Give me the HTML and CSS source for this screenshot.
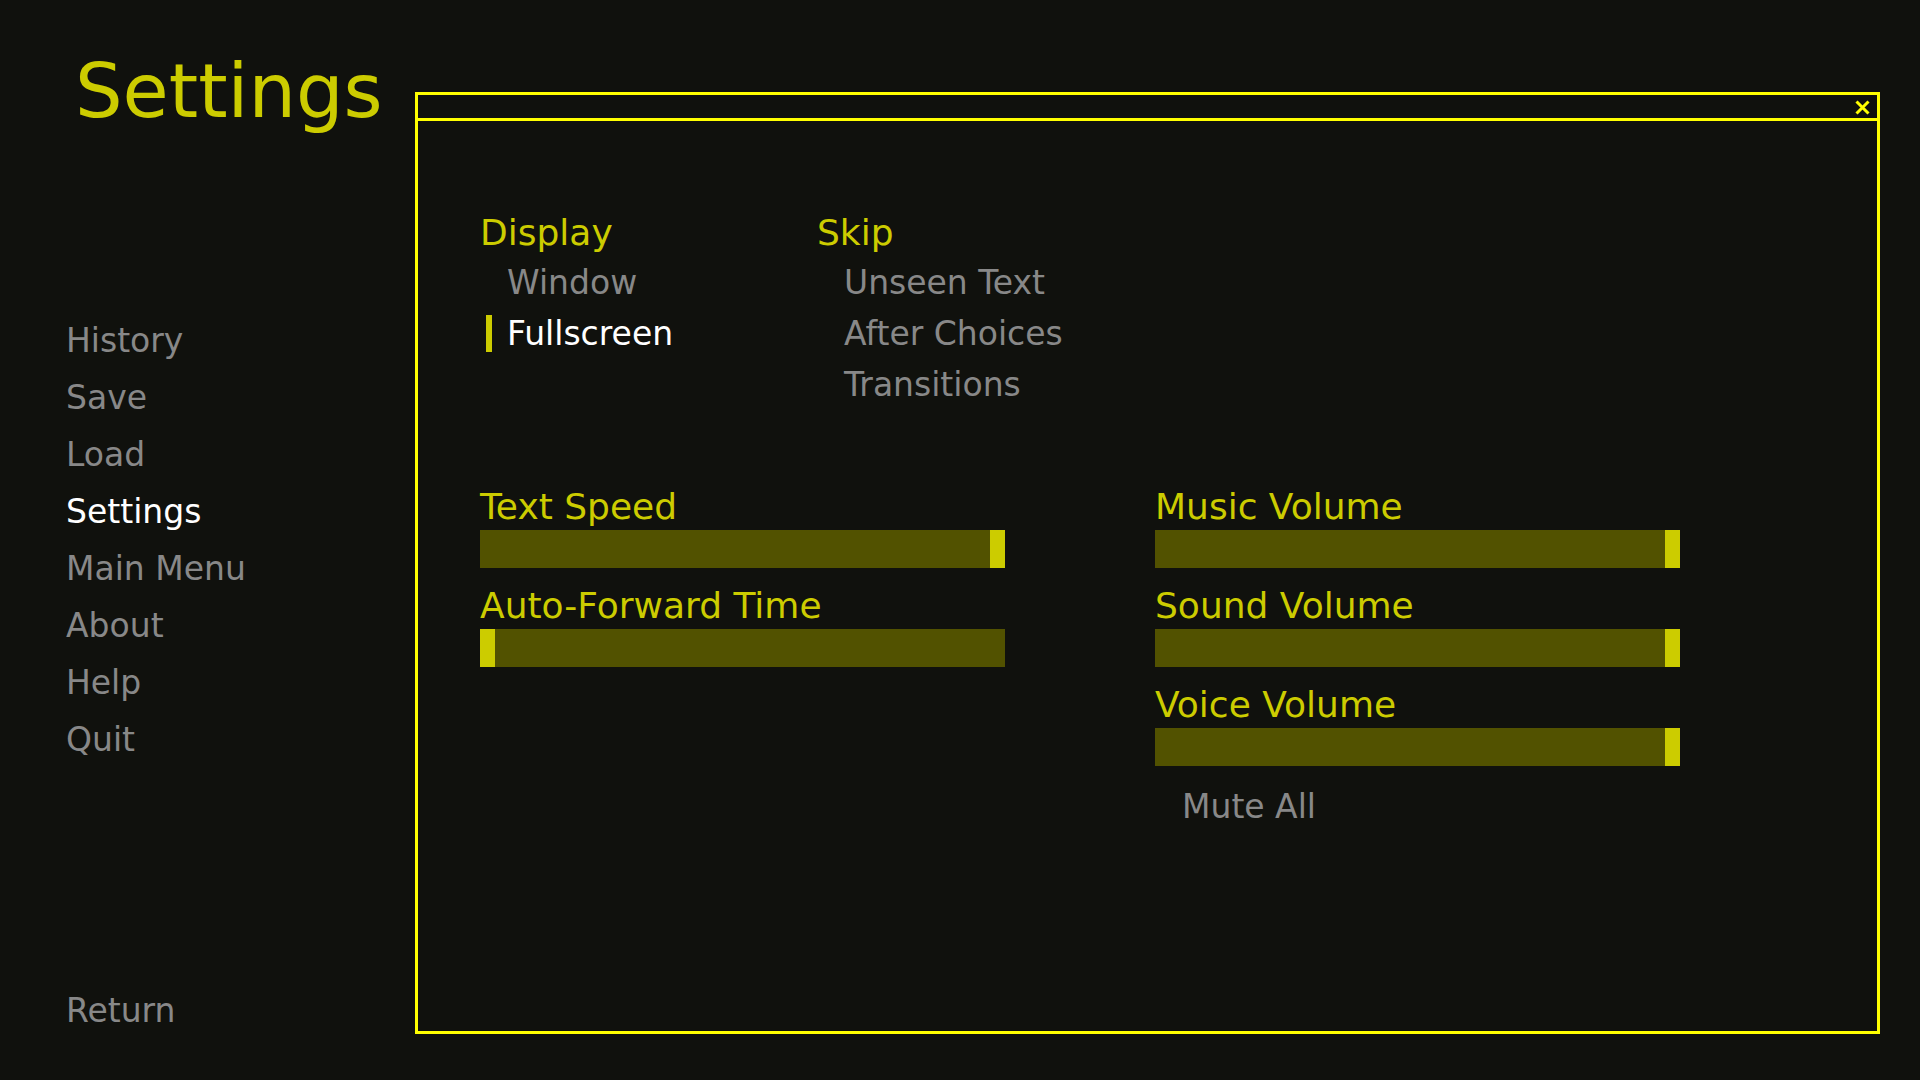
FILE: index.html
```html
<!DOCTYPE html>
<html lang="en">

<head>
  <meta charset="utf-8">
  <meta name="viewport" content="width=device-width, initial-scale=1">
  <title>Settings</title>
  <link rel="stylesheet" href="styles.css">
</head>

<body>
  <div class="screen">
    <!-- left navigation -->
    <aside class="sidebar">
      <h1 class="title">Settings</h1>
      <ul class="nav">
        <li>History</li>
        <li>Save</li>
        <li>Load</li>
        <li class="current">Settings</li>
        <li>Main Menu</li>
        <li>About</li>
        <li>Help</li>
        <li>Quit</li>
      </ul>
      <div class="return">Return</div>
    </aside>

    <!-- preferences window -->
    <section class="window">
      <div class="titlebar">
        <span class="close">
          <svg width="15" height="15" viewBox="0 0 15 15">
            <path d="M1.5 1.5 L13.5 13.5 M13.5 1.5 L1.5 13.5" stroke="#ffff00" stroke-width="3" fill="none" />
          </svg>
        </span>
      </div>
      <div class="content">
        <div class="radios">
          <div class="pref">
            <h2 class="label">Display</h2>
            <ul class="choices">
              <li>Window</li>
              <li class="selected">Fullscreen</li>
            </ul>
          </div>
          <div class="pref">
            <h2 class="label">Skip</h2>
            <ul class="choices">
              <li>Unseen Text</li>
              <li>After Choices</li>
              <li>Transitions</li>
            </ul>
          </div>
        </div>

        <div class="sliders">
          <div class="slider-col">
            <div class="slider">
              <div class="label">Text Speed</div>
              <div class="bar"><span class="thumb" style="--value: 1"></span></div>
            </div>
            <div class="slider">
              <div class="label">Auto-Forward Time</div>
              <div class="bar"><span class="thumb" style="--value: 0"></span></div>
            </div>
          </div>
          <div class="slider-col">
            <div class="slider">
              <div class="label">Music Volume</div>
              <div class="bar"><span class="thumb" style="--value: 1"></span></div>
            </div>
            <div class="slider">
              <div class="label">Sound Volume</div>
              <div class="bar"><span class="thumb" style="--value: 1"></span></div>
            </div>
            <div class="slider">
              <div class="label">Voice Volume</div>
              <div class="bar"><span class="thumb" style="--value: 1"></span></div>
            </div>
            <ul class="choices">
              <li>Mute All</li>
            </ul>
          </div>
        </div>
      </div>
    </section>
  </div>
</body>

</html>
```

FILE: styles.css
```css
* {
  padding: 0;
  margin: 0;
  box-sizing: border-box;
}

ul {
  list-style: none;
}

body {
  background-color: #10110d;
  font-family: "DejaVu Sans", "Liberation Sans", sans-serif;
  color: #888888;
}

.screen {
  display: flex;
  width: 1920px;
  height: 1080px;
}

/* 左侧导航 */
.sidebar {
  width: 415px;
  height: 1080px;
  display: flex;
  flex-direction: column;
}

.title {
  margin-top: 47px;
  padding-left: 75px;
  font-size: 75px;
  line-height: 88px;
  font-weight: normal;
  color: #cccc00;
}

.nav {
  margin-top: 177px;
  padding-left: 66px;
}

.nav li,
.return {
  font-size: 33px;
  line-height: 57px;
  color: #888888;
}

.nav li.current {
  color: #ffffff;
}

.return {
  margin-top: auto;
  margin-bottom: 41px;
  padding-left: 66px;
}

/* 设置窗口 */
.window {
  margin-top: 92px;
  width: 1465px;
  height: 942px;
  border: 3px solid #ffff00;
}

.titlebar {
  height: 26px;
  border-bottom: 3px solid #ffff00;
  display: flex;
  justify-content: flex-end;
  padding: 5px 7px 0 0;
}

.close svg {
  display: block;
}

.content {
  padding: 87px 0 0 62px;
}

.radios {
  display: flex;
}

.pref {
  width: 337px;
}

.label {
  font-size: 36px;
  line-height: 47px;
  font-weight: normal;
  color: #cccc00;
}

.pref .label {
  line-height: 49px;
}

.choices li {
  position: relative;
  padding-left: 27px;
  font-size: 33px;
  line-height: 51px;
  color: #888888;
}

.choices li.selected {
  color: #ffffff;
}

.choices li.selected::before {
  content: "";
  position: absolute;
  left: 6px;
  top: 7px;
  width: 6px;
  height: 37px;
  background-color: #cccc00;
}

/* 滑块 */
.sliders {
  display: flex;
  margin-top: 74px;
}

.slider-col {
  width: 675px;
}

.slider {
  margin-bottom: 15px;
}

.slider .label {
  line-height: 46px;
}

.bar {
  width: 525px;
  height: 38px;
  background-color: #525200;
}

.thumb {
  display: block;
  width: 15px;
  height: 100%;
  margin-left: calc((100% - 15px) * var(--value));
  background-color: #cccc00;
}
```
